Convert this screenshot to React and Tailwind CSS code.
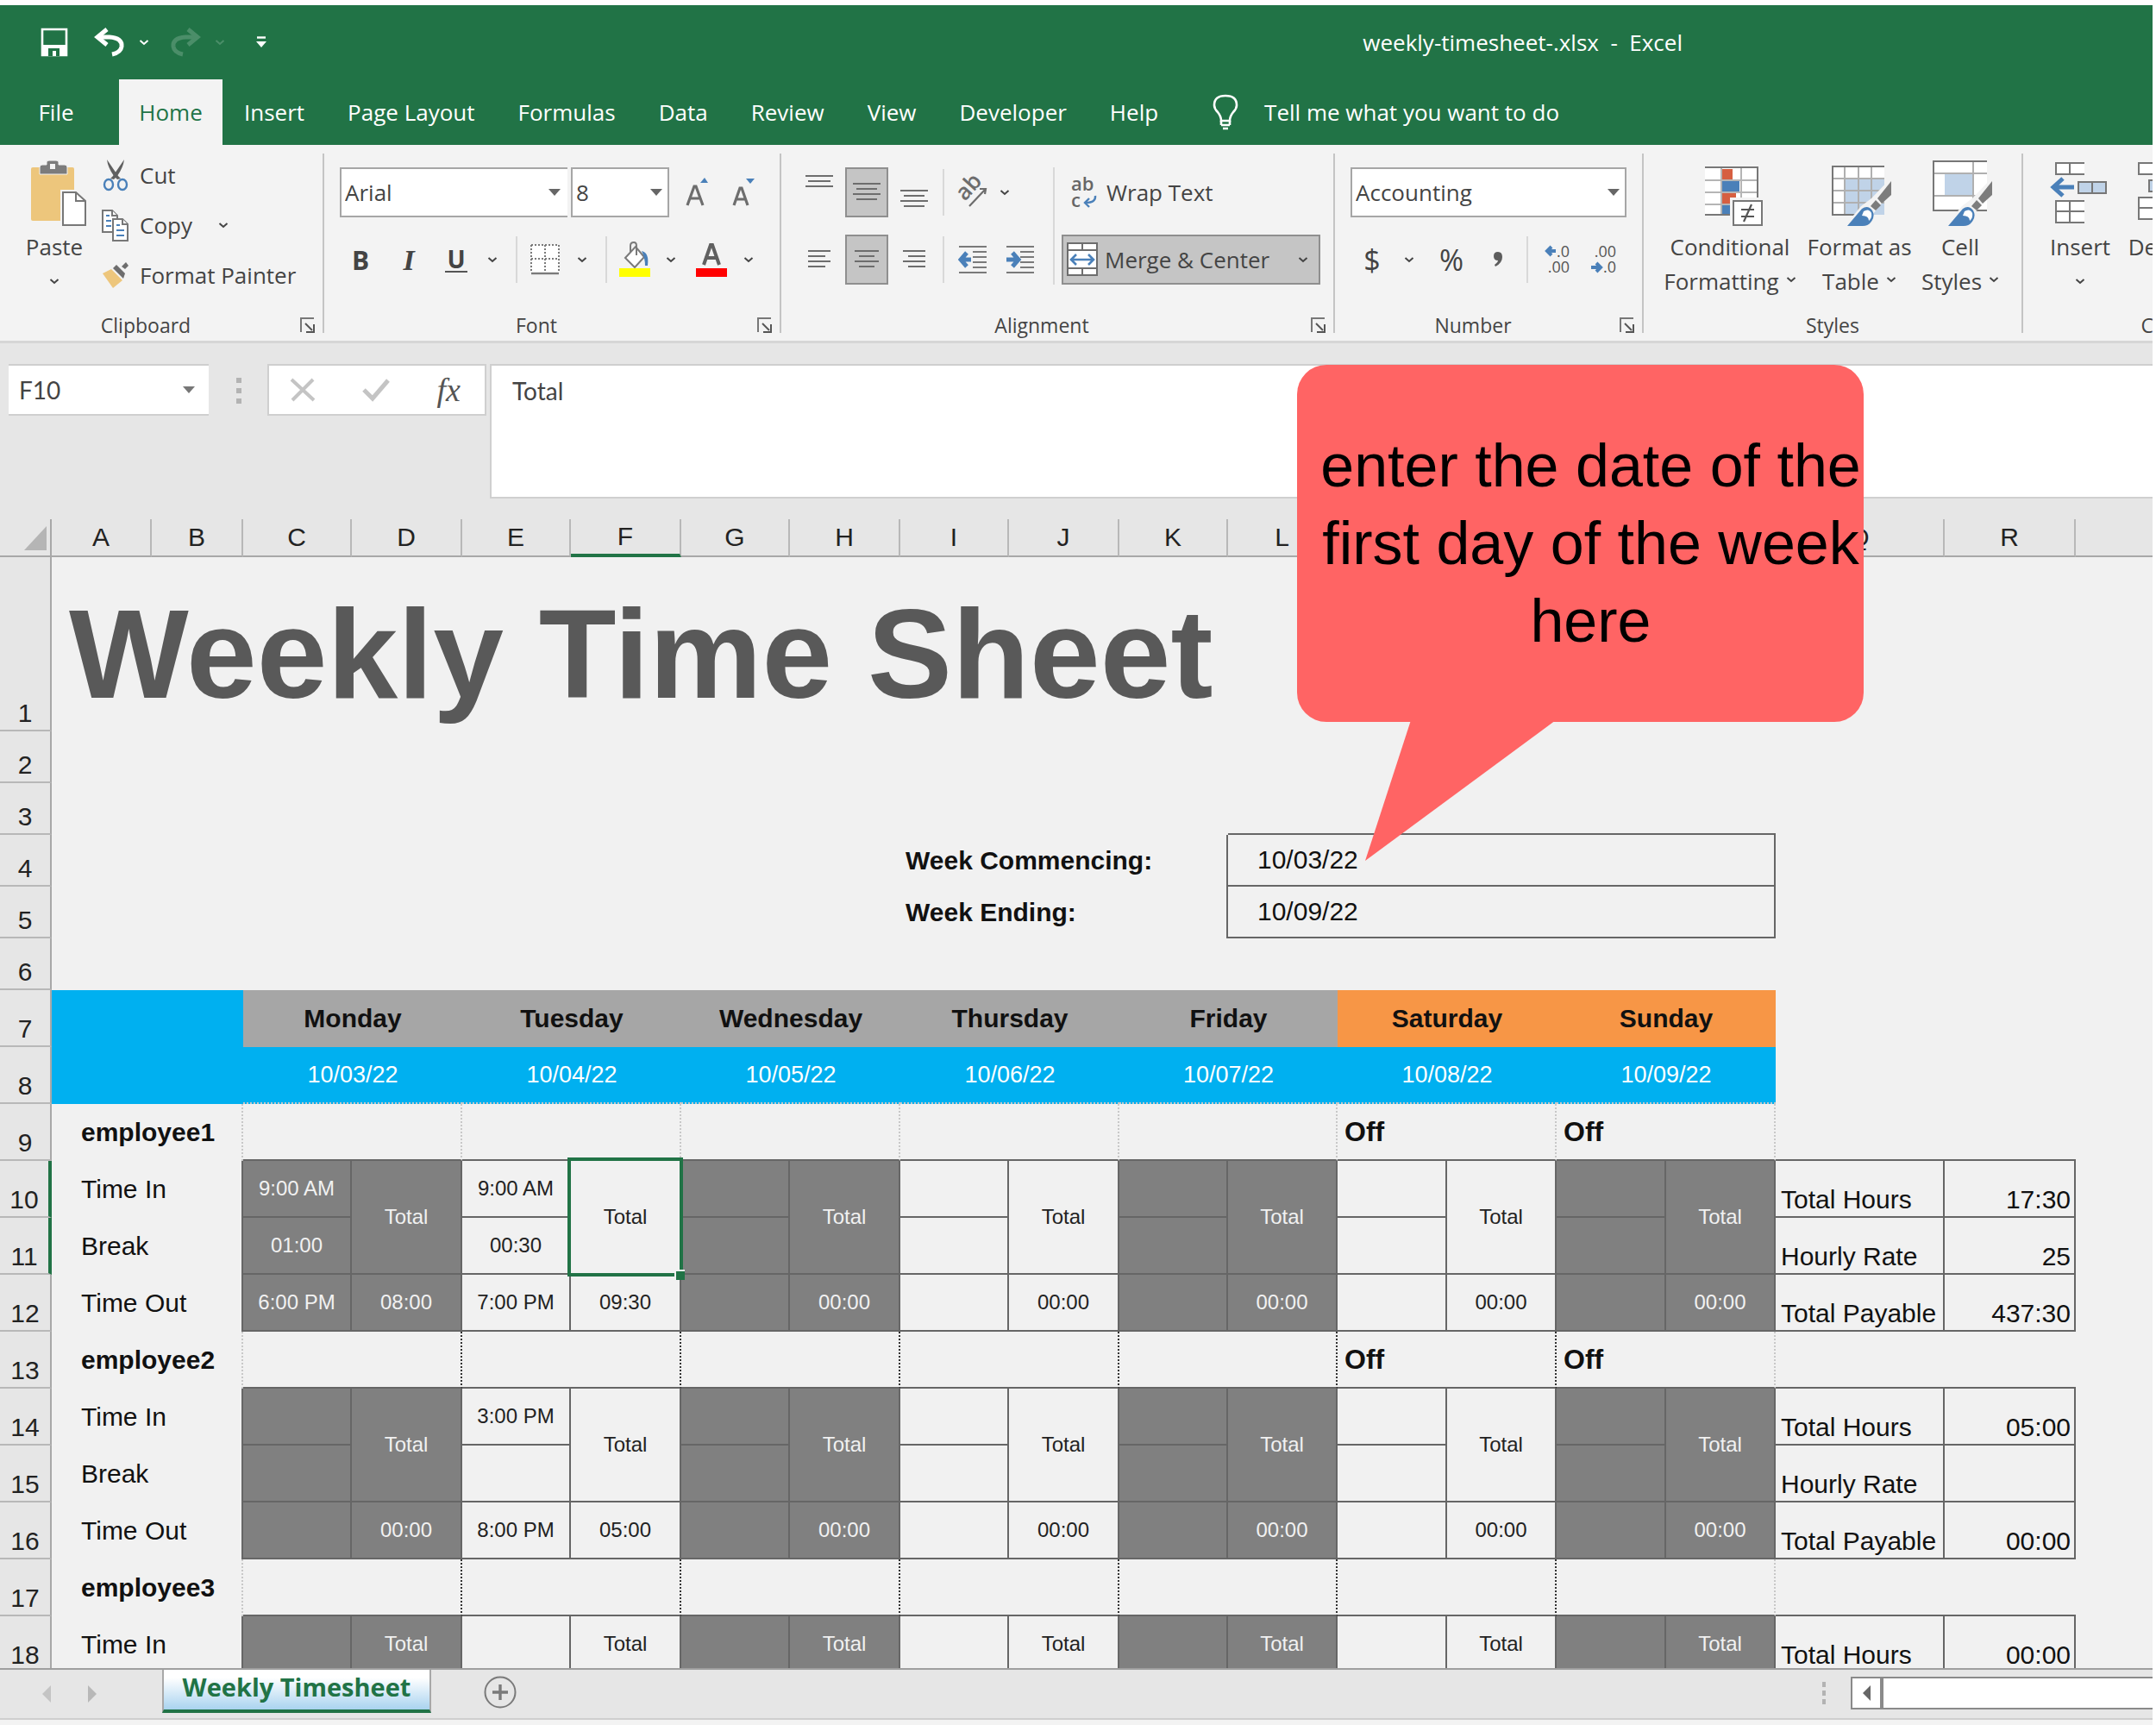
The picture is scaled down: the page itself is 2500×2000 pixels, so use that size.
const GRAY = '#6d6d6d'
const BLUE = '#4a80b9'

/* ---------- small glyphs ---------- */

function Chevron({ className = '' }) {
  return (
    <svg width="12" height="8" viewBox="0 0 12 8" className={'inline-block shrink-0 ' + className} aria-hidden="true">
      <path d="M1.5 2 L6 6 L10.5 2" fill="none" stroke="currentColor" strokeWidth="2" />
    </svg>
  )
}

function Caret({ className = '' }) {
  return (
    <svg width="14" height="8" viewBox="0 0 14 8" className={'pointer-events-none ' + className} aria-hidden="true">
      <path d="M0 0 H14 L7 8 Z" fill="currentColor" />
    </svg>
  )
}

function Launcher({ label }) {
  return (
    <button aria-label={label} className="flex h-[18px] w-9 items-center pl-2.5">
      <svg width="18" height="18" viewBox="0 0 18 18" fill="none" stroke="#555" strokeWidth="2" aria-hidden="true">
        <path d="M1 17 V1 H16" stroke="#777" />
        <path d="M6 7 L14 15" />
        <path d="M16 8 V17 H7" />
      </svg>
    </button>
  )
}

function Lines({ rows, w = 32, h = 34 }) {
  return (
    <svg width={w} height={h} viewBox={`0 0 ${w} ${h}`} stroke={GRAY} strokeWidth="2" aria-hidden="true">
      {rows.map(([x1, x2, y], i) => (
        <path key={i} d={`M${x1} ${y} H${x2}`} />
      ))}
    </svg>
  )
}

/* ---------- ribbon icons ---------- */

function PasteIcon() {
  return (
    <svg width="66" height="78" viewBox="0 0 66 78" className="ml-2.5" aria-hidden="true">
      <rect x="1" y="10" width="50" height="62" rx="2" fill="#edc67c" />
      <path d="M11 18 V10 Q11 7 14 7 H19 V4 Q19 2 22 2 H30 Q33 2 33 4 V7 H40 Q43 7 43 10 V18 Z" fill="#7c7c7c" stroke="#f3f3f3" strokeWidth="1" />
      <rect x="23" y="6" width="6" height="6" fill="#f3f3f3" />
      <path d="M35 36 H55 L66 46 V78 H35 Z" fill="#f3f3f3" />
      <path d="M38 39 H53 L64 49 V77 H38 Z" fill="#fff" stroke="#777" strokeWidth="2" />
      <path d="M53 39 V49 H64" fill="none" stroke="#777" strokeWidth="2" />
    </svg>
  )
}

function CutIcon() {
  return (
    <svg width="30" height="38" viewBox="0 0 30 38" fill="none" aria-hidden="true">
      <path d="M5 1 L18 20 L21 23 L17 24 L13 20 Q6 10 5 1 Z" fill="#606060" />
      <path d="M25 1 L12 20 L9 23 L13 24 L17 20 Q24 10 25 1 Z" fill="#606060" />
      <ellipse cx="7" cy="30" rx="5" ry="6" stroke={BLUE} strokeWidth="2.4" />
      <ellipse cx="23" cy="30" rx="5" ry="6" stroke={BLUE} strokeWidth="2.4" />
    </svg>
  )
}

function CopyIcon() {
  return (
    <svg width="32" height="38" viewBox="0 0 32 38" fill="#fff" stroke="#777" strokeWidth="2" aria-hidden="true">
      <path d="M1 2 H12 L18 8 V27 H1 Z" />
      <path d="M12 2 V8 H18" />
      <path d="M5 8 H9 M5 14 H11 M5 20 H11" stroke={BLUE} />
      <path d="M13 12 H24 L30 18 V37 H13 Z" />
      <path d="M24 12 V18 H30" />
      <path d="M17 19 H21 M17 25 H26 M17 31 H26" stroke={BLUE} />
    </svg>
  )
}

function PainterIcon() {
  return (
    <svg width="32" height="32" viewBox="0 0 32 32" aria-hidden="true">
      <path d="M1 14 L11 9 L24 22 L13 31 Z" fill="#edc67c" />
      <path d="M13 8 L17 4 L27 14 L25 20 Z" fill="#6d6d6d" />
      <path d="M23 6 L28 1 L31 5 L27 9 Z" fill="#6d6d6d" />
    </svg>
  )
}

function SizeIcon({ up }) {
  return (
    <svg width="34" height="38" viewBox="0 0 34 38" aria-hidden="true">
      <path d={up ? 'M5 34 L13 12 H15 L23 34 M8 26 H20' : 'M5 34 L12 14 H14 L21 34 M8 27 H18'} fill="none" stroke={GRAY} strokeWidth="3.2" />
      <path d={up ? 'M20 8 L25 2 L29 8 Z' : 'M19 3 H29 L24 9 Z'} fill={BLUE} />
    </svg>
  )
}

function BorderIcon() {
  return (
    <svg width="34" height="38" viewBox="0 0 34 38" fill="none" stroke="#7a7a7a" strokeWidth="2" aria-hidden="true">
      <rect x="1" y="2" width="32" height="32" fill="#fff" stroke="none" />
      <path d="M1 2 H33 M1 18 H33 M1 2 V34 M17 2 V34 M33 2 V34" strokeDasharray="2 2" />
      <path d="M1 35 H33" strokeWidth="2.4" />
    </svg>
  )
}

function FillIcon() {
  return (
    <svg width="38" height="44" viewBox="0 0 38 44" aria-hidden="true">
      <path d="M8 20 L20 7 L30 19 L19 31 Z" fill="#fff" stroke="#7a7a7a" strokeWidth="2" />
      <path d="M14 14 V6 Q14 2 18 2 Q21 2 21 6 V17" fill="none" stroke="#7a7a7a" strokeWidth="2" />
      <path d="M27 12 Q36 14 34 29 L31 29 Q31 20 27 12 Z" fill={BLUE} />
      <rect x="1" y="32" width="36" height="10" fill="#ffff00" />
    </svg>
  )
}

function FontColorIcon() {
  return (
    <svg width="38" height="44" viewBox="0 0 38 44" className="ml-1" aria-hidden="true">
      <path d="M10 28 L18 5 H20 L28 28 M13 20 H25" fill="none" stroke="#606060" strokeWidth="4" />
      <rect x="1" y="32" width="36" height="10" fill="#ff0000" />
    </svg>
  )
}

function OrientationIcon() {
  return (
    <svg width="38" height="40" viewBox="0 0 38 40" aria-hidden="true">
      <text x="0" y="0" transform="translate(11 31) rotate(-48)" fontFamily="Open Sans, sans-serif" fontSize="26" fontWeight="600" fill={GRAY}>ab</text>
      <path d="M16 36 L34 17 M28 16 L35 16 L34 22" fill="none" stroke={GRAY} strokeWidth="2.2" />
    </svg>
  )
}

function IndentIcon({ out }) {
  return (
    <svg width="34" height="34" viewBox="0 0 34 34" fill="none" stroke="#7a7a7a" strokeWidth="2" className="ml-0.5" aria-hidden="true">
      <path d="M1 2 H33 M17 8 H33 M17 14 H33 M17 20 H33 M17 26 H33 M1 32 H33" />
      <path d={out ? 'M15 17 H4 M10 9 L3 17 L10 25' : 'M1 17 H13 M8 9 L15 17 L8 25'} stroke={BLUE} strokeWidth="5" />
    </svg>
  )
}

function WrapIcon() {
  return (
    <svg width="32" height="38" viewBox="0 0 32 38" aria-hidden="true">
      <text x="1" y="17" fontFamily="Open Sans, sans-serif" fontSize="22" fontWeight="600" fill="#666">ab</text>
      <text x="1" y="36" fontFamily="Open Sans, sans-serif" fontSize="22" fontWeight="600" fill="#666">c</text>
      <path d="M29 23 Q30 31 18 31 M22 26 L17 31 L22 36" fill="none" stroke={BLUE} strokeWidth="2.4" />
    </svg>
  )
}

function MergeIcon() {
  return (
    <svg width="36" height="40" viewBox="0 0 36 40" fill="none" stroke="#6d6d6d" strokeWidth="2" aria-hidden="true">
      <rect x="1" y="1" width="34" height="37" fill="#fff" />
      <path d="M1 9 H35 M1 30 H35 M18 1 V9 M18 30 V38" />
      <path d="M5 20 H31 M11 14 L5 20 L11 26 M25 14 L31 20 L25 26" stroke={BLUE} strokeWidth="2.6" />
    </svg>
  )
}

function DecimalIcon({ more }) {
  return (
    <svg width="32" height="36" viewBox="0 0 32 36" fontFamily="Open Sans, sans-serif" fontSize="18" fill="#555" aria-hidden="true">
      <text x="30" y="15" textAnchor="end">{more ? '.0' : '.00'}</text>
      <text x="30" y="33" textAnchor="end">{more ? '.00' : '.0'}</text>
      <path d={more ? 'M14 8 H4 M9 3 L4 8 L9 13' : 'M1 27 H12 M7 22 L12 27 L7 32'} fill="none" stroke={BLUE} strokeWidth="4" />
    </svg>
  )
}

function ConditionalIcon() {
  return (
    <svg width="70" height="78" viewBox="0 0 70 78" className="ml-2" aria-hidden="true">
      <rect x="2" y="11" width="61" height="54" fill="#fff" />
      <path d="M2 25 H63 M2 39 H63 M2 53 H63 M44 11 V65 M21 11 V65" stroke="#b5b5b5" strokeWidth="2" />
      <rect x="22" y="12" width="12" height="12" fill="#d65f41" />
      <rect x="22" y="26" width="20" height="12" fill={BLUE} />
      <rect x="22" y="40" width="16" height="12" fill="#d65f41" />
      <rect x="22" y="54" width="9" height="11" fill={BLUE} />
      <path d="M2 10 H63 V65 M2 65 H34" fill="none" stroke="#777" strokeWidth="2" />
      <rect x="31" y="45" width="39" height="33" fill="#f3f3f3" />
      <rect x="35" y="49" width="33" height="28" fill="#fff" stroke="#777" strokeWidth="2" />
      <path d="M44 59 H59 M44 67 H59 M56 53 L47 73" stroke="#555" strokeWidth="2.2" />
    </svg>
  )
}

function Brush() {
  return (
    <g>
      <path d="M68 23 V41 L56 54 L48 64 L40 76 L26 77 L15 78 L34 55 L46 46 Z" fill="#f3f3f3" />
      <path d="M69 26 V42 L58 52 L53 46 Z" fill="#7c7c7c" />
      <path d="M51 48 L57 54 L51 60 L45 55 Z" fill="#7c7c7c" />
      <path d="M18 78 L35 58 Q42 53 47 60 Q51 67 45 74 Q42 78 36 78 Z" fill={BLUE} />
      <path d="M37 61 Q43 57 46 63 Q47 69 43 72 Q43 66 35 66 Z" fill="#fff" />
    </g>
  )
}

function FormatTableIcon() {
  return (
    <svg width="72" height="78" viewBox="0 0 72 78" className="ml-2" aria-hidden="true">
      <rect x="1" y="9" width="60" height="56" fill="#fff" />
      <rect x="15" y="23" width="46" height="42" fill="#c0d3e8" />
      <path d="M1 23 H61 M1 37 H61 M1 51 H61 M15 9 V65 M31 9 V65 M46 9 V65" stroke="#b0b0b0" strokeWidth="2" />
      <path d="M61 9 H1 V65 H28" fill="none" stroke="#777" strokeWidth="2" />
      <Brush />
    </svg>
  )
}

function CellStylesIcon() {
  return (
    <svg width="72" height="78" viewBox="0 0 72 78" className="ml-2" aria-hidden="true">
      <rect x="1" y="3" width="62" height="57" fill="#fff" />
      <path d="M1 17 H63 M1 43 H63 M47 3 V60" stroke="#b0b0b0" strokeWidth="2" />
      <rect x="14" y="18" width="32" height="24" fill="#c0d3e8" />
      <path d="M63 3 H1 V60 H63" fill="none" stroke="#777" strokeWidth="2" />
      <Brush />
    </svg>
  )
}

function InsertCellsIcon() {
  return (
    <svg width="70" height="78" viewBox="0 0 70 78" fill="#fff" stroke="#777" strokeWidth="2" className="mr-1" aria-hidden="true">
      <path d="M42 5 H9 V18 H42 M25 5 V18" />
      <path d="M42 49 H9 V74 H42 M9 61 H42 M25 49 V74" />
      <path d="M30 33 H7 M17 23 L6 33 L17 43" fill="none" stroke={BLUE} strokeWidth="5" />
      <rect x="35" y="27" width="32" height="13" fill="#c0d3e8" />
      <path d="M51 27 V40" />
    </svg>
  )
}

function DeleteCellsIcon() {
  return (
    <svg width="70" height="78" viewBox="0 0 70 78" fill="#fff" stroke="#777" strokeWidth="2" aria-hidden="true">
      <path d="M42 5 H8 V18 H42 M25 5 V18" />
      <path d="M42 45 H8 V70 H42 M8 57 H42 M25 45 V70" />
      <rect x="20" y="25" width="24" height="13" fill="#c0d3e8" />
      <path d="M48 24 L62 40 M62 24 L48 40" stroke="#d65f41" strokeWidth="4" />
    </svg>
  )
}

/* ---------- ribbon parts ---------- */

function Group({ title, width, launcher = true, children }) {
  return (
    <section aria-label={title} className={'mt-2.5 flex h-[208px] shrink-0 flex-col border-r-2 border-[#c4c4c4] ' + width}>
      <div className="flex flex-1">{children}</div>
      <div className="flex h-[18px] items-center">
        <span className="flex-1 text-center text-[23px] leading-[18px]">{title}</span>
        {launcher && <Launcher label={title + ' settings'} />}
      </div>
    </section>
  )
}

function Tool({ label, width, on, children }) {
  return (
    <button
      aria-label={label}
      className={'flex h-[58px] shrink-0 items-center justify-center ' + width + (on ? ' border-2 border-[#8f8f8f] bg-[#c5c5c5]' : '')}
    >
      {children}
    </button>
  )
}

function Big({ icon, lines, width, chevron = 'inline' }) {
  return (
    <button className={'flex shrink-0 flex-col items-center pt-1.5 ' + width}>
      {icon}
      <span className="mt-1 leading-10">{lines[0]}</span>
      <span className="flex h-10 items-center gap-2 leading-10">
        {lines[1]}
        <Chevron className={chevron === 'below' ? '' : '-mt-1'} />
      </span>
    </button>
  )
}

function Sep({ className = 'mx-2' }) {
  return <span className={'my-0.5 w-0.5 shrink-0 self-stretch bg-[#d8d8d8] ' + className} />
}

function Picker({ label, value, width, open }) {
  return (
    <div className={'relative h-[58px] shrink-0 ' + width}>
      <select
        aria-label={label}
        defaultValue={value}
        className={'h-full w-full appearance-none border-2 border-[#a6a6a6] bg-white pl-1 text-[26px] leading-[50px] text-[#444] ' + (open ? 'border-r-0' : '')}
      >
        <option>{value}</option>
      </select>
      <Caret className="absolute top-[25px] right-2 text-[#666]" />
    </div>
  )
}

function Ribbon() {
  return (
    <div className="flex h-[230px] shrink-0 overflow-hidden border-b-[3px] border-[#d6d6d6] bg-[#f3f3f3] text-[26px] text-[#444]">
      <Group title="Clipboard" width="w-[376px]">
        <Big icon={<PasteIcon />} lines={['Paste', '']} width="ml-[18px] w-[90px]" chevron="below" />
        <div className="ml-2 flex flex-col gap-2">
          <button className="flex h-[50px] items-center gap-2.5">
            <span className="flex w-9 justify-center"><CutIcon /></span>Cut
          </button>
          <button className="flex h-[50px] items-center gap-2.5">
            <span className="flex w-9 justify-center"><CopyIcon /></span>Copy<Chevron className="ml-5" />
          </button>
          <button className="flex h-[50px] items-center gap-2.5">
            <span className="flex w-9 justify-center"><PainterIcon /></span>Format Painter
          </button>
        </div>
      </Group>

      <Group title="Font" width="w-[530px]">
        <div className="flex flex-col gap-5 pt-4 pl-[18px]">
          <div className="flex items-center">
            <Picker label="Font" value="Arial" width="w-[264px]" open />
            <span className="w-1" />
            <Picker label="Font size" value="8" width="w-[114px]" />
            <span className="w-1.5" />
            <Tool label="Increase font size" width="w-[54px]"><SizeIcon up /></Tool>
            <Tool label="Decrease font size" width="w-[54px]"><SizeIcon /></Tool>
          </div>
          <div className="flex items-center">
            <Tool label="Bold" width="w-12"><b className="text-[30px]">B</b></Tool>
            <Tool label="Italic" width="w-16"><i className="font-['Liberation_Serif',serif] text-[34px] font-bold">I</i></Tool>
            <Tool label="Underline" width="w-[46px]"><span className="border-b-2 border-[#555] px-0.5 text-[28px] leading-7 font-bold">U</span></Tool>
            <Tool label="Underline options" width="w-[38px]"><Chevron /></Tool>
            <Sep />
            <Tool label="Borders" width="w-12"><BorderIcon /></Tool>
            <Tool label="Border options" width="w-[38px]"><Chevron /></Tool>
            <Sep />
            <Tool label="Fill color" width="w-12"><FillIcon /></Tool>
            <Tool label="Fill color options" width="w-9"><Chevron /></Tool>
            <Tool label="Font color" width="w-[54px]"><FontColorIcon /></Tool>
            <Tool label="Font color options" width="w-9"><Chevron /></Tool>
          </div>
        </div>
      </Group>

      <Group title="Alignment" width="w-[642px]">
        <div className="flex flex-col gap-5 pt-4 pl-[19px]">
          <div className="flex items-center">
            <Tool label="Top align" width="w-[50px]"><Lines rows={[[0, 32, 6], [3, 29, 12], [0, 32, 18]]} h={50} /></Tool>
            <span className="w-[5px]" />
            <Tool label="Middle align" width="w-[50px]" on><Lines rows={[[0, 32, 7], [4, 28, 13], [0, 32, 19], [4, 28, 25]]} /></Tool>
            <span className="w-[5px]" />
            <Tool label="Bottom align" width="w-[50px]"><Lines rows={[[0, 32, 23], [4, 28, 29], [0, 32, 35], [4, 28, 41]]} h={50} /></Tool>
            <Sep />
            <Tool label="Orientation" width="w-12"><OrientationIcon /></Tool>
            <Tool label="Orientation options" width="w-7"><Chevron /></Tool>
          </div>
          <div className="flex items-center">
            <Tool label="Align left" width="w-[50px]"><Lines rows={[[0, 26, 7], [0, 20, 13], [0, 26, 19], [0, 20, 25]]} w={26} /></Tool>
            <span className="w-[5px]" />
            <Tool label="Center" width="w-[50px]" on><Lines rows={[[2, 30, 7], [7, 25, 13], [2, 30, 19], [7, 25, 25]]} /></Tool>
            <span className="w-[5px]" />
            <Tool label="Align right" width="w-[50px]"><Lines rows={[[0, 26, 7], [6, 26, 13], [0, 26, 19], [6, 26, 25]]} w={26} /></Tool>
            <Sep />
            <Tool label="Decrease indent" width="w-12"><IndentIcon out /></Tool>
            <Tool label="Increase indent" width="w-[62px]"><IndentIcon /></Tool>
          </div>
        </div>
        <div className="flex h-[154px] pt-3.5"><Sep className="mx-2" /></div>
        <div className="flex flex-col gap-5 pt-4">
          <button className="flex h-[58px] items-center gap-2 pl-2">
            <span className="flex w-9 justify-center"><WrapIcon /></span>Wrap Text
          </button>
          <button className="flex h-[58px] w-[300px] items-center gap-2 border-2 border-[#8f8f8f] bg-[#c5c5c5] pl-1">
            <MergeIcon />Merge &amp; Center<Chevron className="mr-3 ml-auto" />
          </button>
        </div>
      </Group>

      <Group title="Number" width="w-[358px]">
        <div className="flex flex-col gap-5 pt-4 pl-[18px]">
          <Picker label="Number format" value="Accounting" width="w-80" />
          <div className="flex items-center">
            <Tool label="Accounting format" width="w-[50px]"><span className="text-[34px]">$</span></Tool>
            <Tool label="Accounting options" width="w-9"><Chevron /></Tool>
            <Tool label="Percent style" width="w-[62px]"><span className="text-[34px]">%</span></Tool>
            <Tool label="Comma style" width="w-[46px]">
              <svg width="14" height="20" viewBox="0 0 14 20" aria-hidden="true">
                <path d="M7 1 Q12 1 12 7 Q12 14 4 18 L3 16 Q7 13 7 11 Q2 11 2 6 Q2 1 7 1 Z" fill="#5c5c5c" />
              </svg>
            </Tool>
            <Sep className="mx-2.5" />
            <Tool label="Increase decimal" width="w-12"><DecimalIcon more /></Tool>
            <Tool label="Decrease decimal" width="w-[60px]"><DecimalIcon /></Tool>
          </div>
        </div>
      </Group>

      <Group title="Styles" width="w-[440px]" launcher={false}>
        <Big icon={<ConditionalIcon />} lines={['Conditional', 'Formatting']} width="ml-4 w-[168px]" />
        <Big icon={<FormatTableIcon />} lines={['Format as', 'Table']} width="w-[132px]" />
        <Big icon={<CellStylesIcon />} lines={['Cell', 'Styles']} width="w-[102px]" />
      </Group>

      <Group title="Cells" width="w-[325px]" launcher={false}>
        <Big icon={<InsertCellsIcon />} lines={['Insert', '']} width="ml-4 w-[100px]" chevron="below" />
        <Big icon={<DeleteCellsIcon />} lines={['Delete', '']} width="w-[90px]" chevron="below" />
      </Group>
    </div>
  )
}

/* ---------- title bar and tabs ---------- */

function TitleBar() {
  return (
    <header className="flex h-[86px] shrink-0 items-center bg-[#217346] text-[26px] text-white">
      <button aria-label="Save" className="ml-[47px]">
        <svg width="32" height="34" viewBox="0 0 32 34" aria-hidden="true">
          <path d="M2 2 H30 V32 H2 Z" fill="none" stroke="#fff" strokeWidth="2.6" />
          <path d="M2 20 H30 V33 H2 Z" fill="#fff" />
          <path d="M9 33 V24 H22 V33 H18 V27 H14 V33 Z" fill="#217346" />
        </svg>
      </button>
      <button aria-label="Undo" className="ml-[30px]">
        <svg width="36" height="34" viewBox="0 0 36 34" fill="none" stroke="#fff" strokeWidth="5" aria-hidden="true">
          <path d="M4 11 H18 Q33 12 32 22 Q31 29 21 31" />
          <path d="M15 2 L4 11 L15 20" />
        </svg>
      </button>
      <button aria-label="Undo options" className="ml-4 flex"><Chevron /></button>
      <button aria-label="Redo" className="ml-6 text-[#4b8e69]">
        <svg width="36" height="34" viewBox="0 0 36 34" fill="none" stroke="currentColor" strokeWidth="5" aria-hidden="true">
          <path d="M32 11 H18 Q3 12 4 22 Q5 29 15 31" />
          <path d="M21 2 L32 11 L21 20" />
        </svg>
      </button>
      <button aria-label="Redo options" className="ml-4 flex text-[#4b8e69]"><Chevron /></button>
      <button aria-label="Customize toolbar" className="ml-9">
        <svg width="12" height="14" viewBox="0 0 12 14" aria-hidden="true">
          <path d="M1 1.5 H11" stroke="#fff" strokeWidth="2.4" />
          <path d="M0 6 H12 L6 13 Z" fill="#fff" />
        </svg>
      </button>
      <h1 className="mr-[545px] ml-auto whitespace-pre">weekly-timesheet-.xlsx  -  Excel</h1>
    </header>
  )
}

const TABS = ['Insert', 'Page Layout', 'Formulas', 'Data', 'Review', 'View', 'Developer', 'Help']

function Tabs() {
  return (
    <nav className="flex h-[76px] shrink-0 bg-[#217346] text-[26px] text-white">
      <button className="mr-2 w-[130px]">File</button>
      <button className="w-[120px] bg-[#f3f3f3] text-[#217346]">Home</button>
      {TABS.map((t) => (
        <button key={t} className="px-[25px]">{t}</button>
      ))}
      <button className="flex items-center gap-[30px] pl-[38px]">
        <svg width="30" height="42" viewBox="0 0 30 42" fill="none" stroke="#fff" strokeWidth="2.6" aria-hidden="true">
          <path d="M10 31 Q10 26 6 21 Q2 17 2 13 Q2 2 15 2 Q28 2 28 13 Q28 17 24 21 Q20 26 20 31 Z" />
          <path d="M10 36 H20 M12 40 H18 M10 31 V36 M20 31 V36" />
        </svg>
        Tell me what you want to do
      </button>
    </nav>
  )
}

function FormulaBar() {
  return (
    <div className="flex h-[204px] shrink-0 items-start bg-[#e6e6e6] pt-6 text-[28px] text-[#444]">
      <div className="relative ml-2.5 h-[60px] w-[232px] shrink-0">
        <input aria-label="Name box" defaultValue="F10" className="h-full w-full border-y-2 border-[#cfcfcf] bg-white pl-3 font-['Lato','Open_Sans',sans-serif]" />
        <Caret className="absolute top-[26px] right-4 text-[#777]" />
      </div>
      <div className="mt-4 ml-8 flex flex-col gap-1.5">
        <span className="h-1.5 w-1.5 bg-[#b3b3b3]" />
        <span className="h-1.5 w-1.5 bg-[#b3b3b3]" />
        <span className="h-1.5 w-1.5 bg-[#b3b3b3]" />
      </div>
      <div className="ml-[30px] flex h-[60px] w-[254px] shrink-0 items-center justify-between border-2 border-[#cfcfcf] bg-white px-6">
        <button aria-label="Cancel">
          <svg width="30" height="28" viewBox="0 0 30 28" fill="none" stroke="#c4c4c4" strokeWidth="4" aria-hidden="true">
            <path d="M2 2 L28 26 M27 2 L3 26" />
          </svg>
        </button>
        <button aria-label="Enter">
          <svg width="32" height="28" viewBox="0 0 32 28" fill="none" stroke="#c4c4c4" strokeWidth="5" aria-hidden="true">
            <path d="M2 14 L12 24 L30 3" />
          </svg>
        </button>
        <button aria-label="Insert function" className="mr-1 font-['Liberation_Serif',serif] text-[38px] leading-10 text-[#555] italic">fx</button>
      </div>
      <textarea
        aria-label="Formula"
        defaultValue="Total"
        className="ml-1 h-[156px] flex-1 resize-none border-2 border-r-0 border-[#cfcfcf] bg-white pt-2 pl-6 font-['Lato','Open_Sans',sans-serif]"
      />
    </div>
  )
}

/* ---------- worksheet ---------- */

const COLS = [
  ['A', 'w-[116px]'], ['B', 'w-[106px]'], ['C', 'w-[126px]'], ['D', 'w-[128px]'], ['E', 'w-[126px]'], ['F', 'w-[128px]'],
  ['G', 'w-[126px]'], ['H', 'w-[128px]'], ['I', 'w-[126px]'], ['J', 'w-[128px]'], ['K', 'w-[126px]'], ['L', 'w-[127px]'],
  ['M', 'w-[127px]'], ['N', 'w-[127px]'], ['O', 'w-[127px]'], ['P', 'w-[127px]'], ['Q', 'w-[196px]'], ['R', 'w-[152px]'],
]

const DAYS = [
  ['Monday', '10/03/22'], ['Tuesday', '10/04/22'], ['Wednesday', '10/05/22'], ['Thursday', '10/06/22'],
  ['Friday', '10/07/22'], ['Saturday', '10/08/22'], ['Sunday', '10/09/22'],
]

const EMPLOYEES = [
  {
    name: 'employee1', row: 9, off: true, selected: true,
    hours: { 0: ['9:00 AM', '01:00', '6:00 PM', '08:00'], 1: ['9:00 AM', '00:30', '7:00 PM', '09:30'] },
    totals: ['17:30', '25', '437:30'],
  },
  { name: 'employee2', row: 13, off: true, hours: { 1: ['3:00 PM', '', '8:00 PM', '05:00'] }, totals: ['05:00', '', '00:00'] },
  { name: 'employee3', row: 17, hours: {}, totals: ['00:00'] },
]

function RowHead({ n, active }) {
  return (
    <th
      scope="row"
      className={
        'border-b-2 bg-[#e6e6e6] p-0 pb-1 align-bottom leading-[30px] font-normal text-[#222] border-b-[#b8b8b8] ' +
        (active ? 'border-r-4 border-r-[#217346]' : 'border-r-2 border-r-[#a8a8a8]')
      }
    >
      {n}
    </th>
  )
}

const LINE = 'border-[#666] '

function NameRow({ emp }) {
  const first = emp.row === 9
  return (
    <tr className="h-[66px]">
      <RowHead n={emp.row} />
      <th colSpan={2} className="border-r-2 border-dotted border-[#c8c8c8] p-0 pl-[34px] text-left">{emp.name}</th>
      {DAYS.map(([d], i) => (
        <td
          key={d}
          colSpan={2}
          className={
            'border-r-2 border-b-2 border-b-[#666] p-0 pl-2 text-left text-[32px] font-bold [border-right-style:dotted] ' +
            (first || i === 6 ? 'border-r-[#c8c8c8]' : 'border-r-[#333]')
          }
        >
          {emp.off && i > 4 ? 'Off' : ''}
        </td>
      ))}
      <td className={LINE + 'border-b-2'} />
      <td className={LINE + 'border-b-2'} />
      <td />
    </tr>
  )
}

const PARTS = ['Time In', 'Break', 'Time Out']
const SUMS = ['Total Hours', 'Hourly Rate', 'Total Payable']

function EmployeeRows({ emp }) {
  const count = emp.totals.length
  return (
    <>
      <NameRow emp={emp} />
      {PARTS.slice(0, count).map((part, p) => (
        <tr key={part} className="h-[66px]">
          <RowHead n={emp.row + 1 + p} active={emp.selected && p < 2} />
          <td colSpan={2} className={LINE + 'border-r-2 p-0 pl-[34px]'}>{part}</td>
          {DAYS.map(([d], i) => {
            const tone = i % 2 === 0 ? 'bg-[#808080] text-[#f1f1f1] ' : 'bg-[#f1f1f1] text-[#222] '
            const h = emp.hours[i] || ['', '', '', '00:00']
            const cell = LINE + tone + 'border-r-2 border-b-2 p-0 text-center text-[24px]'
            return [
              <td key={d + 'a'} className={cell}>{h[p]}</td>,
              p === 0 && (
                <td key={d + 'b'} rowSpan={count > 1 ? 2 : 1} className={cell + ' relative'}>
                  Total
                  {emp.selected && i === 1 && (
                    <span className="absolute -inset-x-1 -top-1 -bottom-1 z-10 border-4 border-[#217346]">
                      <span className="absolute -right-1.5 -bottom-2 h-3 w-3 border-t-2 border-l-2 border-[#f1f1f1] bg-[#217346]" />
                    </span>
                  )}
                </td>
              ),
              p === 2 && <td key={d + 'c'} className={cell}>{h[3]}</td>,
            ]
          })}
          <td className={LINE + 'border-r-2 border-b-2 p-0 pb-1 pl-1.5 align-bottom leading-[30px] whitespace-nowrap'}>{SUMS[p]}</td>
          <td className={LINE + 'border-r-2 border-b-2 p-0 pr-1 pb-1 text-right align-bottom leading-[30px]'}>{emp.totals[p]}</td>
          <td />
        </tr>
      ))}
    </>
  )
}

function Sheet() {
  return (
    <div className="min-h-0 flex-1 overflow-hidden bg-[#f1f1f1]">
      <table className="w-full table-fixed border-separate border-spacing-0 font-['Liberation_Sans',Arial,sans-serif] text-[30px] leading-9 text-[#111]">
        <colgroup>
          <col className="w-[60px]" />
          {COLS.map(([c, w]) => <col key={c} className={w} />)}
          <col />
        </colgroup>
        <thead>
          <tr className="h-[44px] bg-[#e6e6e6]">
            <td className="border-r-2 border-b-2 border-[#a8a8a8] p-0 align-bottom">
              <svg width="26" height="28" viewBox="0 0 26 28" className="mb-1.5 ml-7" aria-hidden="true">
                <path d="M26 0 V28 H0 Z" fill="#b5b5b5" />
              </svg>
            </td>
            {COLS.map(([c]) => (
              <th
                key={c}
                scope="col"
                className={
                  'border-r-2 border-r-[#b8b8b8] p-0 text-[30px] leading-9 font-normal text-[#222] ' +
                  (c === 'F' ? 'border-b-4 border-b-[#217346]' : 'border-b-2 border-b-[#a8a8a8]')
                }
              >
                {c}
              </th>
            ))}
            <td className="border-b-2 border-[#a8a8a8]" />
          </tr>
        </thead>
        <tbody>
          <tr className="h-[202px]">
            <RowHead n={1} />
            <td colSpan={19} className="p-0 pb-4 pl-5 align-bottom">
              <h2 className="text-[147px] leading-[147px] font-bold whitespace-nowrap text-[#595959]">Weekly Time Sheet</h2>
            </td>
          </tr>
          <tr className="h-[60px]"><RowHead n={2} /><td colSpan={19} /></tr>
          <tr className="h-[60px]">
            <RowHead n={3} />
            <td colSpan={11} />
            <td colSpan={5} className={LINE + 'border-b-2'} />
            <td colSpan={3} />
          </tr>
          {[['Week Commencing:', '10/03/22', 4], ['Week Ending:', '10/09/22', 5]].map(([label, date, n]) => (
            <tr key={n} className="h-[60px]">
              <RowHead n={n} />
              <td colSpan={8} />
              <th colSpan={3} className={LINE + 'border-r-2 p-0 pl-1.5 text-left'}>{label}</th>
              <td colSpan={5} className={LINE + 'border-r-2 border-b-2 p-0 pl-[34px]'}>{date}</td>
              <td colSpan={3} />
            </tr>
          ))}
          <tr className="h-[60px]"><RowHead n={6} /><td colSpan={19} /></tr>
          <tr className="h-[66px]">
            <RowHead n={7} />
            <td colSpan={2} className="bg-[#00b0f0]" />
            {DAYS.map(([d], i) => (
              <th key={d} colSpan={2} className={'p-0 ' + (i > 4 ? 'bg-[#f79646]' : 'bg-[#a6a6a6]')}>{d}</th>
            ))}
            <td colSpan={3} />
          </tr>
          <tr className="h-[66px]">
            <RowHead n={8} />
            <td colSpan={2} className="bg-[#00b0f0]" />
            {DAYS.map(([d, date]) => (
              <td key={d} colSpan={2} className="border-b-2 border-dotted border-[#c8c8c8] bg-[#00b0f0] p-0 text-center text-[27px] text-white">{date}</td>
            ))}
            <td colSpan={3} />
          </tr>
          {EMPLOYEES.map((e) => <EmployeeRows key={e.name} emp={e} />)}
        </tbody>
      </table>
    </div>
  )
}

function SheetBar() {
  return (
    <footer className="flex h-[66px] shrink-0 flex-col bg-[#f3f3f3]">
      <div className="flex h-[60px] items-start border-t-2 border-b-2 border-t-[#9f9f9f] border-b-[#cfcfcf] bg-[#e6e6e6]">
        <button aria-label="Previous sheet" className="mt-[18px] ml-[49px]">
          <svg width="10" height="20" viewBox="0 0 10 20" aria-hidden="true"><path d="M10 0 V20 L0 10 Z" fill="#c4c4c4" /></svg>
        </button>
        <button aria-label="Next sheet" className="mt-[18px] ml-[43px]">
          <svg width="10" height="20" viewBox="0 0 10 20" aria-hidden="true"><path d="M0 0 V20 L10 10 Z" fill="#b8b8b8" /></svg>
        </button>
        <button className="ml-[76px] flex h-[50px] w-[312px] justify-center border-x-2 border-b-4 border-x-[#a8a8a8] border-b-[#217346] bg-linear-to-b from-white from-20% to-[#a9d3ef] text-[29px] leading-10 font-bold whitespace-nowrap text-[#217346]">
          Weekly Timesheet
        </button>
        <button aria-label="New sheet" className="mt-1.5 ml-[60px]">
          <svg width="40" height="40" viewBox="0 0 40 40" fill="none" stroke="#7a7a7a" aria-hidden="true">
            <circle cx="20" cy="20" r="17.5" strokeWidth="2" />
            <path d="M11 20 H29 M20 11 V29" strokeWidth="3.4" />
          </svg>
        </button>
        <div className="mt-3.5 mr-[29px] ml-auto flex flex-col gap-1">
          <span className="h-1.5 w-1 bg-[#b3b3b3]" />
          <span className="h-1.5 w-1 bg-[#b3b3b3]" />
          <span className="h-1.5 w-1 bg-[#b3b3b3]" />
        </div>
        <div className="mt-2 flex h-[38px] w-[350px] border-2 border-r-0 border-[#8a8a8a] bg-white">
          <button aria-label="Scroll left" className="flex w-9 items-center justify-center border-r-4 border-[#8a8a8a]">
            <svg width="9" height="18" viewBox="0 0 9 18" aria-hidden="true"><path d="M9 0 V18 L0 9 Z" fill="#666" /></svg>
          </button>
        </div>
      </div>
    </footer>
  )
}

function Callout() {
  return (
    <aside className="absolute top-[423px] left-[1504px] z-20 flex h-[414px] w-[657px] items-center justify-center rounded-[34px] bg-[#ff6464] pl-6 text-center font-['Liberation_Sans',Arial,sans-serif] text-[70px] leading-[90px] text-black">
      <svg width="222" height="164" viewBox="0 0 222 164" className="absolute top-[412px] left-[78px]" aria-hidden="true">
        <path d="M54 0 H222 L1 163 Z" fill="#ff6464" />
      </svg>
      <p className="relative whitespace-nowrap">
        enter the date of the<br />first day of the week<br />here
      </p>
    </aside>
  )
}

export default function App() {
  return (
    <div className="h-screen overflow-hidden bg-white pt-1.5 pr-1 font-['Open_Sans','Noto_Sans',sans-serif]">
      <div className="flex h-full flex-col overflow-hidden">
        <TitleBar />
        <Tabs />
        <Ribbon />
        <FormulaBar />
        <Sheet />
        <SheetBar />
      </div>
      <Callout />
    </div>
  )
}
